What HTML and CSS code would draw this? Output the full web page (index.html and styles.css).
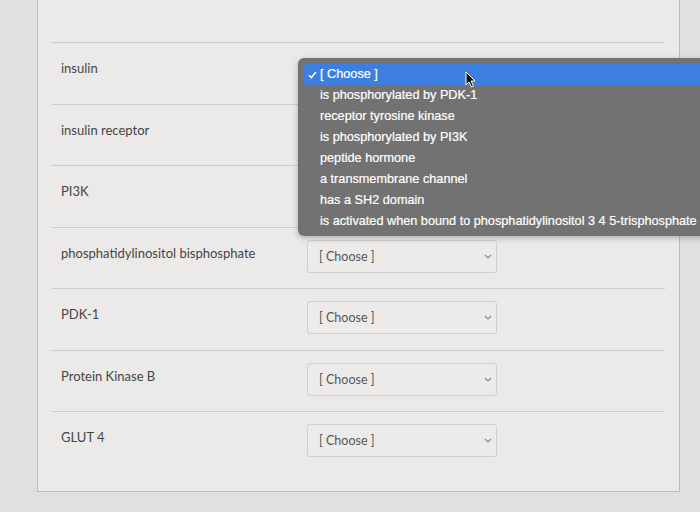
FILE: index.html
```html
<!DOCTYPE html>
<html lang="en">
<head>
<meta charset="utf-8">
<title>Matching question</title>
<link rel="stylesheet" href="styles.css">
</head>
<body>
<div class="page">
  <div class="card">
    <div class="row">
      <div class="label">insulin</div>
      <div class="select covered"><span>[ Choose ]</span><svg class="chev" width="8" height="5" viewBox="0 0 8 5"><path d="M1 1 L4 4 L7 1" fill="none" stroke="#8a8a8a" stroke-width="1.2"/></svg></div>
    </div>
    <div class="row">
      <div class="label">insulin receptor</div>
      <div class="select covered"><span>[ Choose ]</span><svg class="chev" width="8" height="5" viewBox="0 0 8 5"><path d="M1 1 L4 4 L7 1" fill="none" stroke="#8a8a8a" stroke-width="1.2"/></svg></div>
    </div>
    <div class="row">
      <div class="label">PI3K</div>
      <div class="select covered"><span>[ Choose ]</span><svg class="chev" width="8" height="5" viewBox="0 0 8 5"><path d="M1 1 L4 4 L7 1" fill="none" stroke="#8a8a8a" stroke-width="1.2"/></svg></div>
    </div>
    <div class="row">
      <div class="label">phosphatidylinositol bisphosphate</div>
      <div class="select"><span>[ Choose ]</span><svg class="chev" width="8" height="5" viewBox="0 0 8 5"><path d="M1 1 L4 4 L7 1" fill="none" stroke="#8a8a8a" stroke-width="1.2"/></svg></div>
    </div>
    <div class="row">
      <div class="label">PDK-1</div>
      <div class="select"><span>[ Choose ]</span><svg class="chev" width="8" height="5" viewBox="0 0 8 5"><path d="M1 1 L4 4 L7 1" fill="none" stroke="#8a8a8a" stroke-width="1.2"/></svg></div>
    </div>
    <div class="row">
      <div class="label">Protein Kinase B</div>
      <div class="select"><span>[ Choose ]</span><svg class="chev" width="8" height="5" viewBox="0 0 8 5"><path d="M1 1 L4 4 L7 1" fill="none" stroke="#8a8a8a" stroke-width="1.2"/></svg></div>
    </div>
    <div class="row">
      <div class="label">GLUT 4</div>
      <div class="select"><span>[ Choose ]</span><svg class="chev" width="8" height="5" viewBox="0 0 8 5"><path d="M1 1 L4 4 L7 1" fill="none" stroke="#8a8a8a" stroke-width="1.2"/></svg></div>
    </div>
  </div>

  <div class="menu">
    <div class="item active"><svg class="check" width="9" height="8" viewBox="0 0 9 8"><path d="M1 4.2 L3.4 6.6 L8 1" fill="none" stroke="#fff" stroke-width="1.5"/></svg>[ Choose ]</div>
    <div class="item">is phosphorylated by PDK-1</div>
    <div class="item">receptor tyrosine kinase</div>
    <div class="item">is phosphorylated by PI3K</div>
    <div class="item">peptide hormone</div>
    <div class="item">a transmembrane channel</div>
    <div class="item">has a SH2 domain</div>
    <div class="item">is activated when bound to phosphatidylinositol 3 4 5-trisphosphate</div>
  </div>

  <svg class="cursor" width="12" height="18" viewBox="0 0 12 18"><path d="M1 1 L1 14 L4 11 L6.5 16 L8.5 15 L6 10 L10 10 Z" fill="#111" stroke="#fff" stroke-width="1"/></svg>
</div>
</body>
</html>
```

FILE: styles.css
```css
html, body {
  margin: 0;
  padding: 0;
}

body {
  background: #e0e0e0;
}

.page {
  position: relative;
  width: 700px;
  height: 512px;
  overflow: hidden;
  box-sizing: border-box;
  padding-left: 37px;
  background: #e0e0df;
  font-family: Lato, "Liberation Sans", sans-serif;
}

.card {
  width: 643px;
  height: 492px;
  box-sizing: border-box;
  border: 1px solid #bdbdbd;
  border-top: none;
  background: #ebeae8;
  padding: 42px 14px 0 13px;
}

.row {
  display: flex;
  align-items: flex-start;
  height: 61.5px;
  box-sizing: border-box;
  border-top: 1px solid #cbcbca;
}

.label {
  width: 246px;
  padding-left: 10px;
  padding-top: 17px;
  font-size: 13px;
  line-height: 16px;
  color: #454545;
}

.select {
  margin-top: 12px;
  width: 190px;
  height: 33px;
  box-sizing: border-box;
  border: 1px solid #cfcfce;
  border-radius: 3px;
  background: #ecebea;
  display: flex;
  align-items: center;
  justify-content: space-between;
  padding: 0 4px 0 11px;
  font-size: 12.5px;
  color: #565656;
}

.select.covered {
  visibility: hidden;
}

.menu {
  position: absolute;
  left: 298px;
  top: 58px;
  width: 420px;
  box-sizing: border-box;
  padding: 6px 5px 4px;
  background: #727272;
  border-radius: 6px;
  box-shadow: 0 2px 6px rgba(0, 0, 0, 0.25);
  font-family: "Liberation Sans", Arial, sans-serif;
  font-size: 12.7px;
  color: #fff;
  -webkit-text-stroke: 0.2px #fff;
}

.item {
  position: relative;
  height: 21px;
  line-height: 21px;
  padding-left: 17px;
  white-space: nowrap;
}

.item.active {
  background: #3d7fde;
  border-radius: 4px;
}

.check {
  position: absolute;
  left: 5px;
  top: 7px;
}

.cursor {
  position: absolute;
  left: 465px;
  top: 71px;
}
```
